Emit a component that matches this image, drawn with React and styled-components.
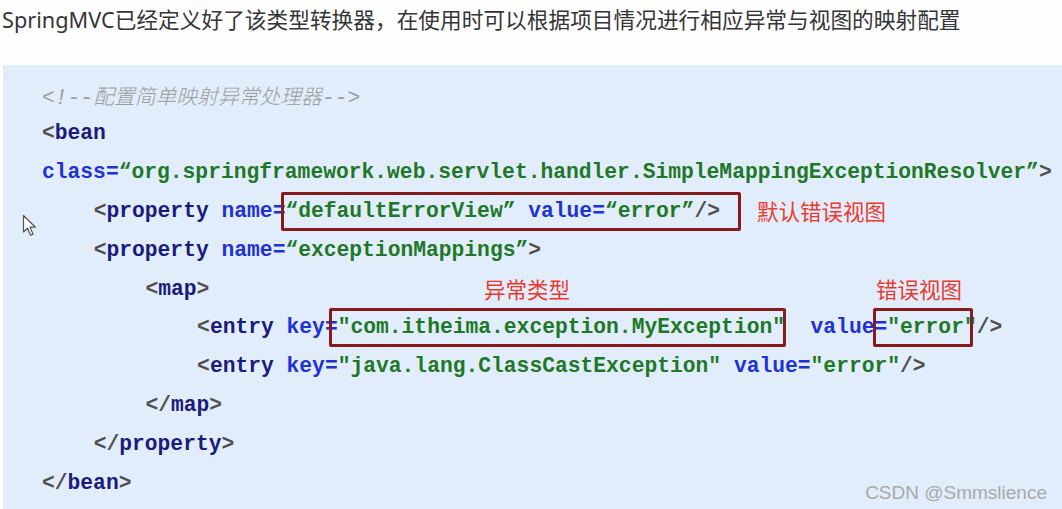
import React from 'react'
import styled, { createGlobalStyle } from 'styled-components'

const Global = createGlobalStyle`
  html, body {
    margin: 0;
    padding: 0;
    background: #fdfefd;
  }
  #root {
    width: 1062px;
    height: 509px;
    overflow: hidden;
  }
`

const Page = styled.div`
  display: flex;
  flex-direction: column;
  height: 509px;
`

const Title = styled.div`
  height: 40px;
  line-height: 40px;
  margin-bottom: 25px;
  padding-left: 2px;
  font-family: "Noto Sans", "Noto Sans CJK SC", sans-serif;
  font-size: 21.7px;
  color: #353535;
  white-space: nowrap;
`

const Panel = styled.div`
  position: relative;
  flex: 1;
  margin-left: 3px;
  padding: 10.6px 0 0 39px;
  background: #e2edfb;
  font-family: "Liberation Mono", "Noto Sans CJK SC", monospace;
  font-weight: bold;
  font-size: 21.3px;
`

const Line = styled.div`
  height: 38.8px;
  line-height: 38.8px;
  white-space: pre;
  padding-left: ${p => (p.$indent || 0) * 51.7}px;
`

const Comment = styled.span`
  font-style: italic;
  font-weight: normal;
  color: #9c9c9c;
`

const CommentCjk = styled.span`
  font-family: "Noto Sans CJK SC", sans-serif;
  font-weight: 300;
  font-size: 20.8px;
`

const Tag = styled.span`
  color: #1b1b7e;
`

const Attr = styled.span`
  color: #1f32d6;
`

const Val = styled.span`
  color: #1f7828;
`

const Punct = styled.span`
  color: #505050;
`

const Mark = styled.div`
  position: absolute;
  left: ${p => p.$x - 3}px;
  top: ${p => p.$y - 65}px;
  width: ${p => p.$w}px;
  height: 39px;
  box-sizing: border-box;
  border: 3px solid #861b1b;
  border-radius: 2px;
  pointer-events: none;
`

const Note = styled.div`
  position: absolute;
  left: ${p => p.$x - 3}px;
  top: ${p => p.$y - 65}px;
  font-family: "Noto Sans CJK SC", sans-serif;
  font-weight: normal;
  font-size: 21.5px;
  line-height: 30px;
  color: #ea3a2f;
  white-space: nowrap;
`

const Watermark = styled.div`
  position: absolute;
  right: 15px;
  bottom: 5px;
  font-family: "Liberation Sans", Arial, sans-serif;
  font-weight: normal;
  font-size: 19px;
  color: #a9a9a9;
`

const Cursor = styled.svg`
  position: absolute;
  left: 19px;
  top: 149px;
`

const Open = ({ children }) => (
  <>
    <Punct>&lt;</Punct>
    <Tag>{children}</Tag>
  </>
)

const Close = ({ children }) => (
  <>
    <Punct>&lt;/</Punct>
    <Tag>{children}</Tag>
    <Punct>&gt;</Punct>
  </>
)

const A = ({ name, value, open = '"', close = '"' }) => (
  <>
    <Attr>{name}=</Attr>
    <Val>{open}{value}{close}</Val>
  </>
)

export default function App() {
  return (
    <Page>
      <Global />
      <Title>SpringMVC已经定义好了该类型转换器，在使用时可以根据项目情况进行相应异常与视图的映射配置</Title>
      <Panel>
        <Line>
          <Comment>&lt;!--<CommentCjk>配置简单映射异常处理器</CommentCjk>--&gt;</Comment>
        </Line>
        <Line><Open>bean</Open></Line>
        <Line>
          <A name="class" value="org.springframework.web.servlet.handler.SimpleMappingExceptionResolver" open="“" close="”" />
          <Punct>&gt;</Punct>
        </Line>
        <Line $indent={1}>
          <Open>property</Open> <A name="name" value="defaultErrorView" open="“" close="”" />{' '}
          <A name="value" value="error" open="“" close="”" />
          <Punct>/&gt;</Punct>
        </Line>
        <Line $indent={1}>
          <Open>property</Open> <A name="name" value="exceptionMappings" open="“" close="”" />
          <Punct>&gt;</Punct>
        </Line>
        <Line $indent={2}>
          <Open>map</Open>
          <Punct>&gt;</Punct>
        </Line>
        <Line $indent={3}>
          <Open>entry</Open> <A name="key" value="com.itheima.exception.MyException" />{'  '}
          <A name="value" value="error" />
          <Punct>/&gt;</Punct>
        </Line>
        <Line $indent={3}>
          <Open>entry</Open> <A name="key" value="java.lang.ClassCastException" />{' '}
          <A name="value" value="error" />
          <Punct>/&gt;</Punct>
        </Line>
        <Line $indent={2}><Close>map</Close></Line>
        <Line $indent={1}><Close>property</Close></Line>
        <Line><Close>bean</Close></Line>

        <Mark $x={281} $y={192} $w={460} />
        <Mark $x={329} $y={308} $w={457} />
        <Mark $x={873} $y={308} $w={100} />

        <Note $x={757} $y={196}>默认错误视图</Note>
        <Note $x={484} $y={274}>异常类型</Note>
        <Note $x={876} $y={274}>错误视图</Note>

        <Cursor width="18" height="24" viewBox="0 0 18 24">
          <path
            d="M1.5 1.5 L1.5 18 L5.5 14.2 L8.6 21.2 L11 20.1 L8 13.2 L13.4 13.2 Z"
            fill="#fff"
            stroke="#555"
            strokeWidth="1.2"
            strokeLinejoin="round"
          />
        </Cursor>

        <Watermark>CSDN @Smmslience</Watermark>
      </Panel>
    </Page>
  )
}
